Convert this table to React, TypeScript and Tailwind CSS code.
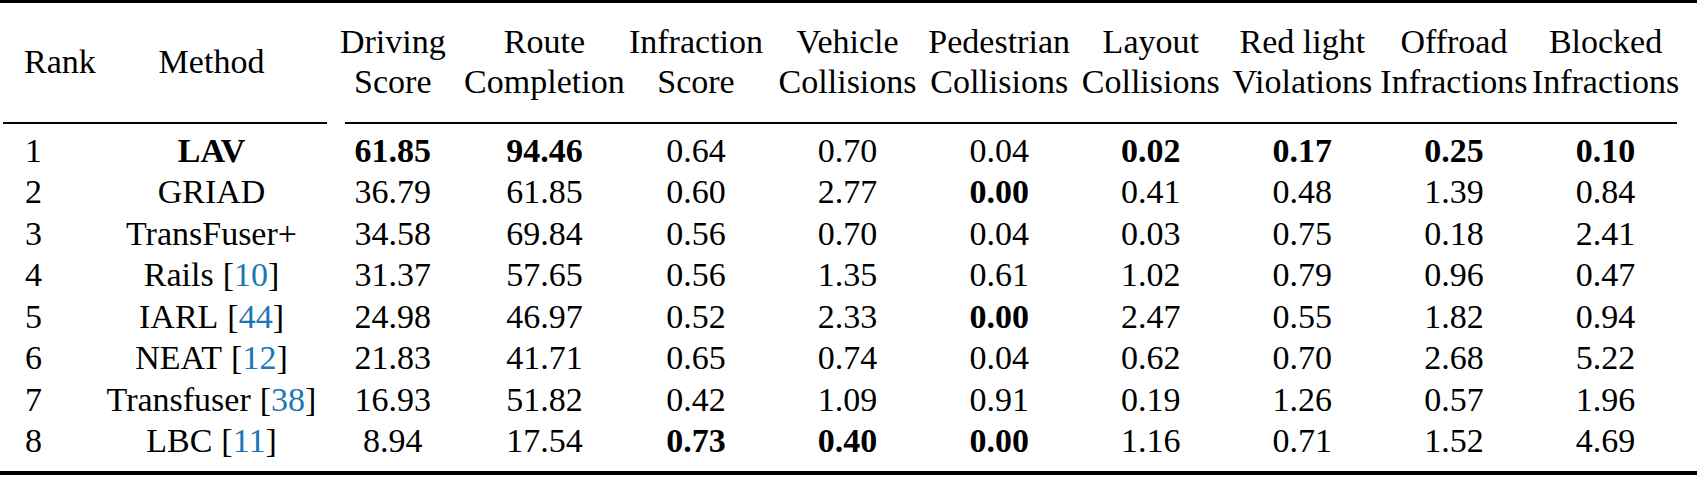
const columns = [
    ["Driving", "Score"],
    ["Route", "Completion"],
    ["Infraction", "Score"],
    ["Vehicle", "Collisions"],
    ["Pedestrian", "Collisions"],
    ["Layout", "Collisions"],
    ["Red light", "Violations"],
    ["Offroad", "Infractions"],
    ["Blocked", "Infractions"],
];

// "*" in front of a value marks the best result (bold)
const rows = [
    { rank: 1, method: "LAV", cite: "", best: true, values: ["*61.85", "*94.46", "0.64", "0.70", "0.04", "*0.02", "*0.17", "*0.25", "*0.10"] },
    { rank: 2, method: "GRIAD", cite: "", values: ["36.79", "61.85", "0.60", "2.77", "*0.00", "0.41", "0.48", "1.39", "0.84"] },
    { rank: 3, method: "TransFuser+", cite: "", values: ["34.58", "69.84", "0.56", "0.70", "0.04", "0.03", "0.75", "0.18", "2.41"] },
    { rank: 4, method: "Rails", cite: "10", values: ["31.37", "57.65", "0.56", "1.35", "0.61", "1.02", "0.79", "0.96", "0.47"] },
    { rank: 5, method: "IARL", cite: "44", values: ["24.98", "46.97", "0.52", "2.33", "*0.00", "2.47", "0.55", "1.82", "0.94"] },
    { rank: 6, method: "NEAT", cite: "12", values: ["21.83", "41.71", "0.65", "0.74", "0.04", "0.62", "0.70", "2.68", "5.22"] },
    { rank: 7, method: "Transfuser", cite: "38", values: ["16.93", "51.82", "0.42", "1.09", "0.91", "0.19", "1.26", "0.57", "1.96"] },
    { rank: 8, method: "LBC", cite: "11", values: ["8.94", "17.54", "*0.73", "*0.40", "*0.00", "1.16", "0.71", "1.52", "4.69"] },
];

const gridCols = "grid grid-cols-[106px_211px_repeat(9,151.6px)]";

function App() {
    return (
        <div className="w-[1699px] h-[477px] bg-white text-black font-['Liberation_Serif'] text-[34px]">
            <div className="w-[1697px] h-[3px] bg-black" />

            {/* header */}
            <div className={`${gridCols} pt-[19px] pb-[21px] leading-[39.5px]`}>
                <div className="flex items-center pl-[24px]">Rank</div>
                <div className="flex items-center justify-center">Method</div>
                {columns.map(([top, bottom], i) => (
                    <div key={i} className="min-w-0 flex flex-col items-center whitespace-nowrap">
                        <span>{top}</span>
                        <span>{bottom}</span>
                    </div>
                ))}
            </div>

            <div className="flex">
                <div className="ml-[3px] w-[324px] h-[1.5px] bg-black" />
                <div className="ml-[18px] w-[1332px] h-[1.5px] bg-black" />
            </div>

            {/* body */}
            <div className="pt-[6.5px] pb-[9.5px] leading-[41.43px]">
                {rows.map((row) => (
                    <div key={row.rank} className={gridCols}>
                        <div className="pl-[25px]">{row.rank}</div>
                        <div className={`flex justify-center whitespace-nowrap ${row.best ? "font-bold" : ""}`}>
                            {row.method}
                            {row.cite && (
                                <span className="ml-[9px]">
                                    [<span className="text-[#1f76b4]">{row.cite}</span>]
                                </span>
                            )}
                        </div>
                        {row.values.map((v, i) => (
                            <div
                                key={i}
                                className={`min-w-0 flex justify-center whitespace-nowrap ${v.startsWith("*") ? "font-bold" : ""}`}
                            >
                                {v.replace("*", "")}
                            </div>
                        ))}
                    </div>
                ))}
            </div>

            <div className="w-[1697px] h-[4px] bg-black" />
        </div>
    );
}

export default App;
